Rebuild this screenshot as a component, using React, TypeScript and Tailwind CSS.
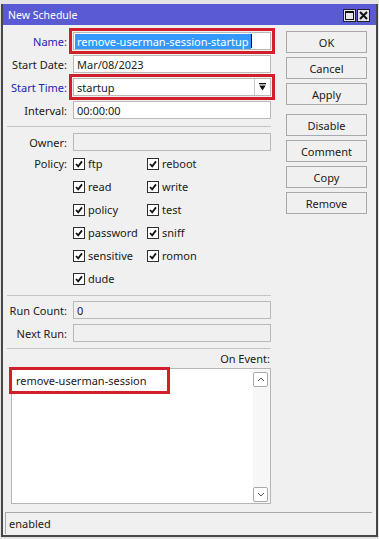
import React from "react";

const LABEL = "w-[60px] shrink-0 text-right whitespace-nowrap";

function Field({
  label,
  blue = false,
  children,
}: {
  label: string;
  blue?: boolean;
  children: React.ReactNode;
}) {
  return (
    <div className="flex items-center gap-[6px] h-[18px]">
      <span className={`${LABEL} ${blue ? "text-[#2323b4]" : ""}`}>{label}</span>
      {children}
    </div>
  );
}

function Box({
  value = "",
  disabled = false,
}: {
  value?: string;
  disabled?: boolean;
}) {
  return (
    <div
      className={`flex-1 h-[18px] border border-[#b9b9b9] flex items-center px-[3px] ${
        disabled ? "bg-[#f0f0f0]" : "bg-white"
      }`}
    >
      {value}
    </div>
  );
}

function Check({ label }: { label: string }) {
  return (
    <div className="flex items-center gap-[3px] w-[74px]">
      <span className="w-[12px] h-[12px] border border-[#2e2e2e] bg-white flex items-center justify-center">
        <svg width="8" height="8" viewBox="0 0 8 8">
          <path d="M1 4 L3.2 6.4 L7 1.4" fill="none" stroke="#111" strokeWidth="1.8" />
        </svg>
      </span>
      <span>{label}</span>
    </div>
  );
}

function Sep({ className = "" }: { className?: string }) {
  return <div className={`h-px bg-[#c4c4c4] ${className}`} />;
}

function Btn({ label, className = "" }: { label: string; className?: string }) {
  return (
    <div
      className={`h-[22px] border border-[#a9a9a9] bg-[#f0f0f0] flex items-center justify-center ${className}`}
    >
      {label}
    </div>
  );
}

const policy: [string, string | null][] = [
  ["ftp", "reboot"],
  ["read", "write"],
  ["policy", "test"],
  ["password", "sniff"],
  ["sensitive", "romon"],
  ["dude", null],
];

export default function App() {
  return (
    <div className="w-[379px] h-[539px] bg-[#e4e4e4] overflow-hidden pt-[4px] pl-[1px] font-['Noto_Sans','Open_Sans',sans-serif] text-[11px] text-[#1a1a1a] leading-none">
      <div className="w-[377px] h-[533px] border-x-2 border-b-2 border-[#474747] bg-[#f0f0f0] flex flex-col">
        {/* title bar */}
        <div className="h-[21px] bg-[#5a5ad4] flex items-center pl-[5px] pr-[6px] shrink-0">
          <span className="text-white text-[10.5px] flex-1 pt-[2px]">New Schedule</span>
          <div className="flex gap-[1px] pt-[2px]">
            <span className="w-[13px] h-[13px] bg-[#e6e6e6] border border-[#222] flex items-center justify-center">
              <svg width="9" height="9" viewBox="0 0 9 9">
                <rect x="0.5" y="0.5" width="8" height="8" fill="none" stroke="#111" />
                <rect x="0" y="0" width="9" height="2" fill="#111" />
              </svg>
            </span>
            <span className="w-[13px] h-[13px] bg-[#e6e6e6] border border-[#222] flex items-center justify-center">
              <svg width="9" height="9" viewBox="0 0 9 9">
                <path d="M1 1 L8 8 M8 1 L1 8" stroke="#111" strokeWidth="2" />
              </svg>
            </span>
          </div>
        </div>

        {/* body */}
        <div className="flex flex-1">
          <div className="w-[264px] ml-[4px] pt-[7px] flex flex-col">
            <div className="flex flex-col gap-[5px]">
              <Field label="Name:" blue>
                <div className="flex-1 h-[18px] border border-[#b9b9b9] bg-white flex items-center pl-[1px] outline-[3px] outline-solid outline-[#d21f2b] outline-offset-1">
                  <span className="bg-[#3399ff] text-white h-[15px] flex items-center px-[2px]">
                    remove-userman-session-startup
                  </span>
                  <span className="w-px h-[14px] bg-[#111]" />
                </div>
              </Field>
              <Field label="Start Date:">
                <Box value="Mar/08/2023" />
              </Field>
              <Field label="Start Time:" blue>
                <div className="flex-1 h-[18px] border border-[#b9b9b9] bg-white flex items-center outline-[3px] outline-solid outline-[#d21f2b] outline-offset-1">
                  <span className="flex-1 pl-[3px]">startup</span>
                  <span className="w-[16px] h-full border-l border-[#c8c8c8] flex items-center justify-center">
                    <svg width="7" height="8" viewBox="0 0 7 8">
                      <rect x="0" y="0" width="7" height="1.3" fill="#111" />
                      <path d="M0.3 2.6 H6.7 L3.5 7.4 Z" fill="#111" />
                    </svg>
                  </span>
                </div>
              </Field>
              <Field label="Interval:">
                <Box value="00:00:00" />
              </Field>
            </div>
            <Sep className="mt-[7px] mb-[6px]" />
            <Field label="Owner:">
              <Box disabled />
            </Field>
            <div className="flex mt-[1px]">
              <div className={`${LABEL} h-[23px] flex items-center justify-end`}>Policy:</div>
              <div className="flex flex-col ml-[6px]">
                {policy.map(([a, b]) => (
                  <div key={a} className="flex h-[23px] items-center">
                    <Check label={a} />
                    {b && <Check label={b} />}
                  </div>
                ))}
              </div>
            </div>
            <Sep className="mt-[5px] mb-[5px]" />
            <div className="flex flex-col gap-[5px]">
              <Field label="Run Count:">
                <Box value="0" disabled />
              </Field>
              <Field label="Next Run:">
                <Box disabled />
              </Field>
            </div>
            <Sep className="mt-[6px]" />
            <div className="text-right mt-[4px] h-[13px] pr-[1px]">On Event:</div>
            <div className="relative ml-[4px] w-[260px] h-[136px] mt-[2px] border border-[#b5b5b5] bg-white flex">
              <div className="flex-1 pl-[4px] pt-[6px]">remove-userman-session</div>
              <div className="w-[17px] bg-[#f7f7f7] flex flex-col justify-between items-start pt-[3px] pb-[1px]">
                <span className="w-[15px] h-[15px] border border-[#a9a9a9] rounded-[2px] bg-white flex items-center justify-center">
                  <svg width="8" height="5" viewBox="0 0 8 5">
                    <path d="M1 4 L4 1 L7 4" fill="none" stroke="#555" strokeWidth="1" />
                  </svg>
                </span>
                <span className="w-[15px] h-[15px] border border-[#a9a9a9] rounded-[2px] bg-white flex items-center justify-center">
                  <svg width="8" height="5" viewBox="0 0 8 5">
                    <path d="M1 1 L4 4 L7 1" fill="none" stroke="#555" strokeWidth="1" />
                  </svg>
                </span>
              </div>
              <div className="absolute left-[-3px] top-[-2px] w-[161px] h-[27px] border-[3px] border-[#d21f2b]" />
            </div>
          </div>

          {/* buttons */}
          <div className="w-[81px] ml-[15px] pt-[6px] flex flex-col gap-[4px]">
            <Btn label="OK" />
            <Btn label="Cancel" />
            <Btn label="Apply" />
            <Btn label="Disable" className="mt-[5px]" />
            <Btn label="Comment" />
            <Btn label="Copy" />
            <Btn label="Remove" />
          </div>
        </div>

        {/* status bar */}
        <div className="h-[22px] ml-[2px] mr-[4px] mb-[1px] border-t border-l border-[#a8a8a8] flex items-center pl-[3px] shrink-0">
          enabled
        </div>
      </div>
    </div>
  );
}
